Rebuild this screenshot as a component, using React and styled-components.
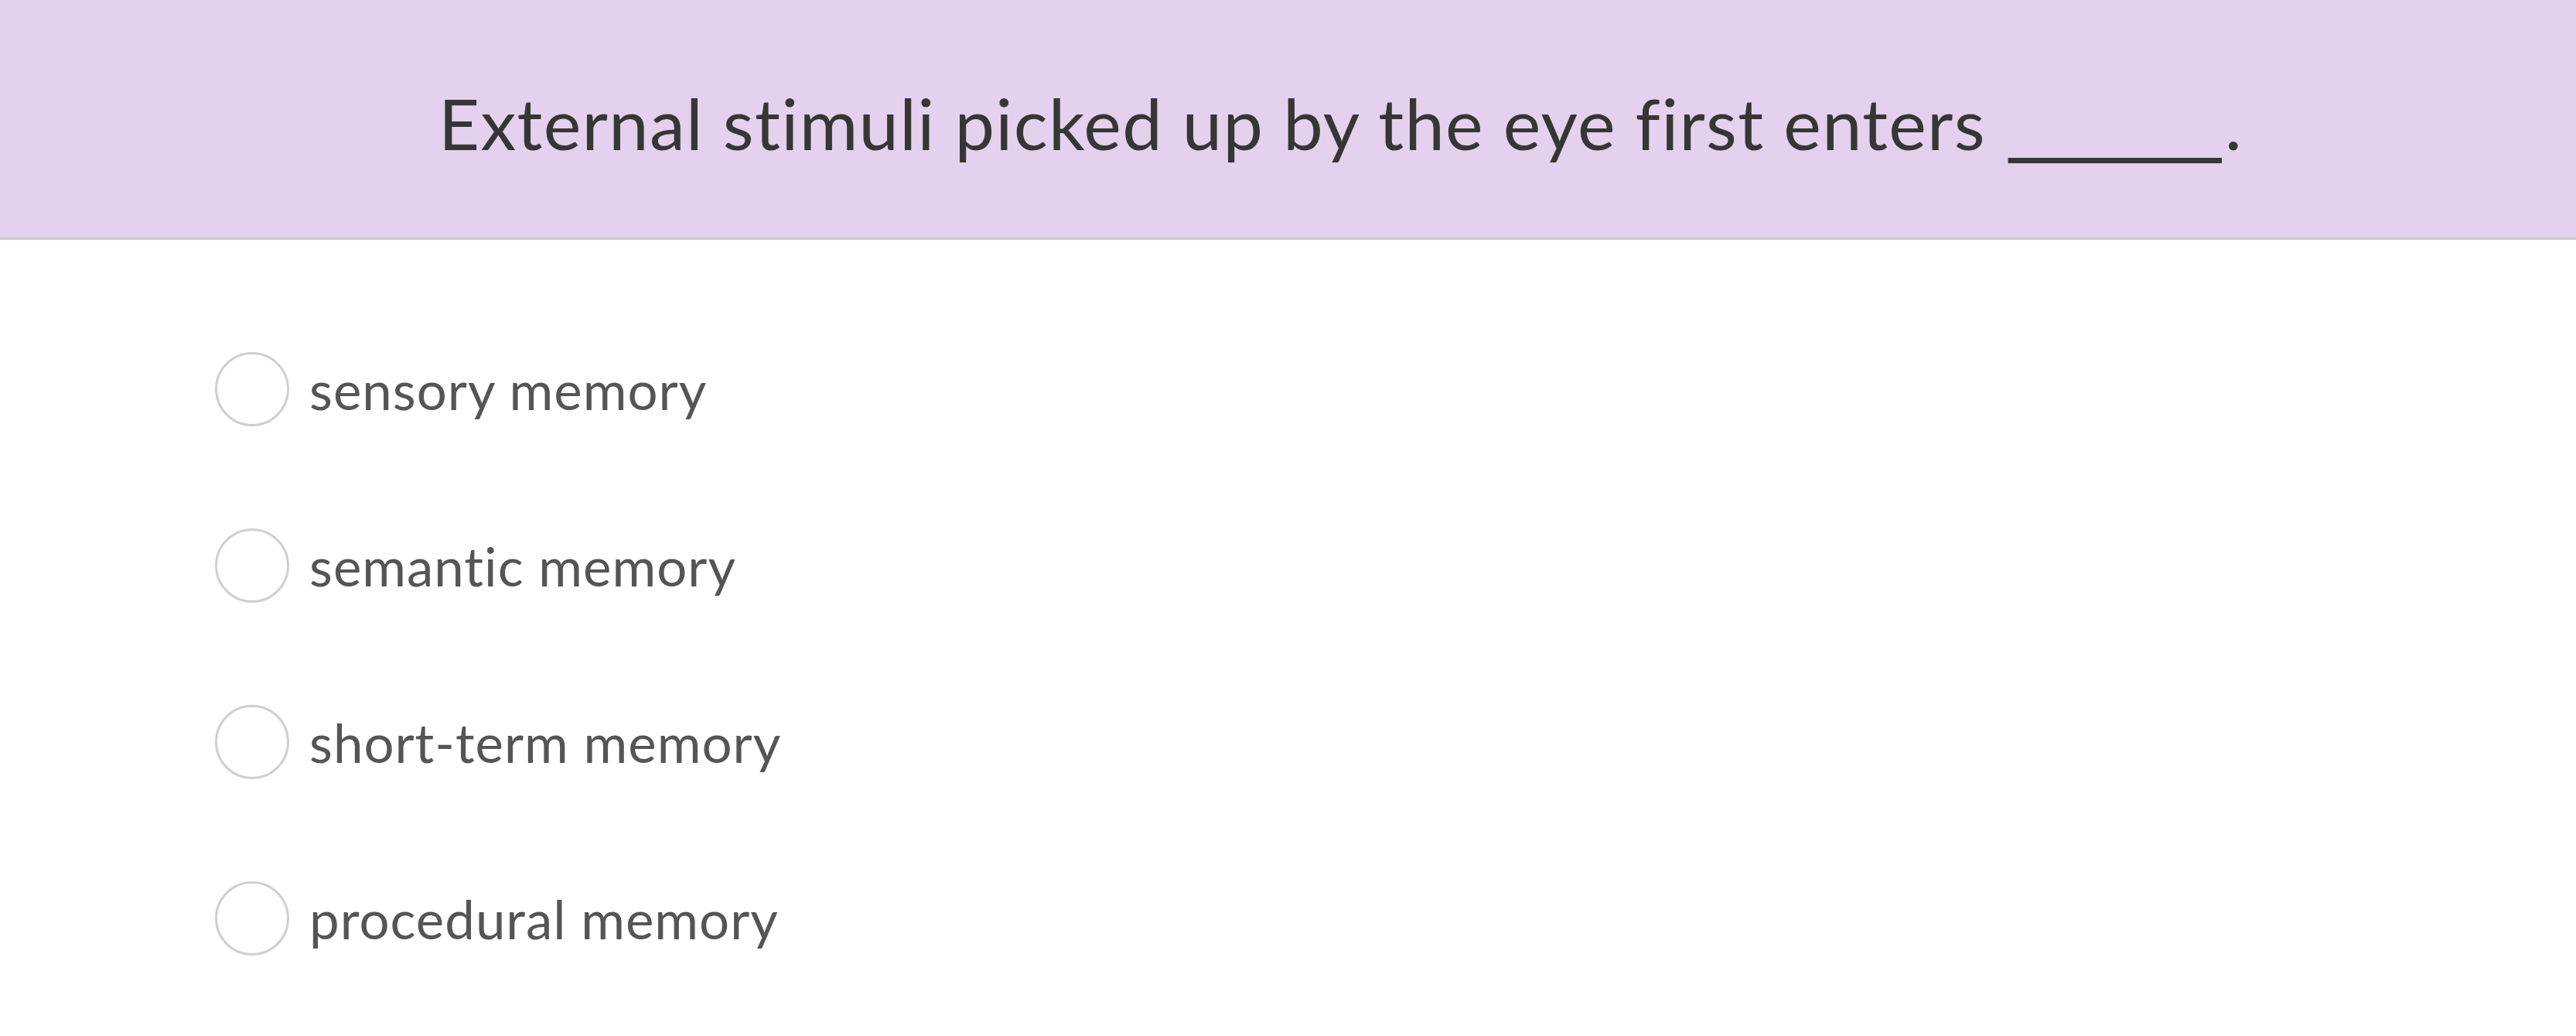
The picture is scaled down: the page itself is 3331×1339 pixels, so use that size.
import React from 'react';
import styled, { createGlobalStyle } from 'styled-components';

const GlobalStyle = createGlobalStyle`
   html, body {
      margin: 0;
      padding: 0;
      background: #ffffff;
   }
   body {
      font-family: 'Lato', 'Open Sans', sans-serif;
      font-variant-ligatures: none;
   }
`;

const Page = styled.div`
   width: 100%;
   min-height: 100vh;
   background: #ffffff;
`;

const Banner = styled.header`
   display: flex;
   align-items: center;
   justify-content: center;
   height: 307px;
   padding-left: 136px;
   background: #e4d1ed;
   border-bottom: 3px solid #cecbce;
   box-sizing: content-box;
`;

const Question = styled.h1`
   margin: 0;
   padding-top: 10px;
   font-family: 'Lato', sans-serif;
   font-weight: 400;
   font-size: 92px;
   color: #363636;
   letter-spacing: 1.3px;
   font-variant-ligatures: none;
`;

// the fill-in blank: wider underscores pulled together into one line
const Blank = styled.span`
   font-size: 1.28em;
   line-height: 0;
   letter-spacing: -8px;
   margin-right: 8px;
`;

const Choices = styled.ul`
   list-style: none;
   margin: 0;
   padding: 79px 0 0 278px;
`;

const Choice = styled.li`
   display: flex;
   align-items: center;
   gap: 26px;
   height: 228px;
   cursor: pointer;
`;

const Radio = styled.span`
   flex: none;
   width: 90px;
   height: 90px;
   border-radius: 50%;
   border: 3px solid #cfcfcf;
   background: #ffffff;
`;

const Label = styled.span`
   font-family: 'Lato', sans-serif;
   font-size: 69px;
   letter-spacing: 1px;
   color: #555555;
   font-variant-ligatures: none;
`;

const options = [
   'sensory memory',
   'semantic memory',
   'short-term memory',
   'procedural memory',
];

const App = () => (
   <Page>
      <GlobalStyle />
      <Banner>
         <Question>
            External stimuli picked up by the eye first enters <Blank>______</Blank>.
         </Question>
      </Banner>
      <Choices>
         {options.map(option => (
            <Choice key={option}>
               <Radio />
               <Label>{option}</Label>
            </Choice>
         ))}
      </Choices>
   </Page>
);

export default App;
